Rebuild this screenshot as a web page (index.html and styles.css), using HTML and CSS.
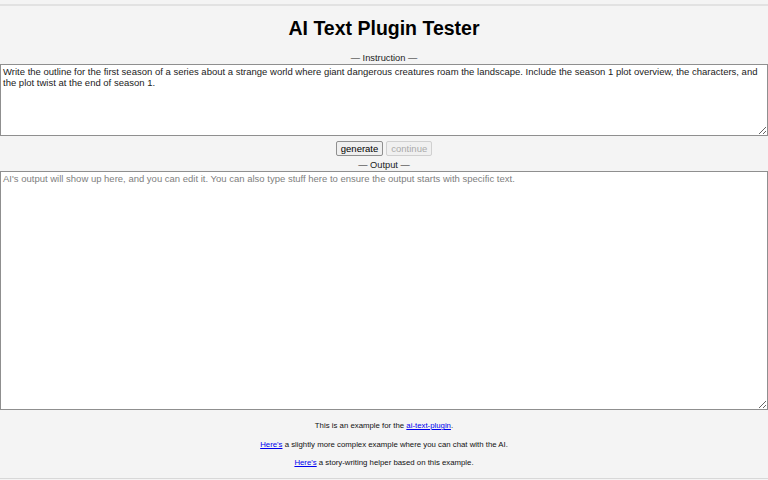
FILE: index.html
```html
<!DOCTYPE html>
<html lang="en">
<head>
    <meta charset="utf-8" />
    <meta name="viewport" content="width=device-width, initial-scale=1" />
    <title>AI Text Plugin Tester</title>
    <link rel="stylesheet" href="styles.css">
</head>
<body>

<div class="page">
    <h1 class="title">AI Text Plugin Tester</h1>

    <div class="field-label">— Instruction —</div>
    <textarea id="instruction" class="box box-instruction">Write the outline for the first season of a series about a strange world where giant dangerous creatures roam the landscape. Include the season 1 plot overview, the characters, and the plot twist at the end of season 1.</textarea>

    <div class="buttons">
        <button id="generate-button">generate</button>
        <button id="continue-button" disabled>continue</button>
    </div>

    <div class="field-label">— Output —</div>
    <textarea id="output" class="box box-output" placeholder="AI's output will show up here, and you can edit it. You can also type stuff here to ensure the output starts with specific text."></textarea>

    <div class="notes">
        <p>This is an example for the <a href="#">ai-text-plugin</a>.</p>
        <p><a href="#">Here's</a> a slightly more complex example where you can chat with the AI.</p>
        <p><a href="#">Here's</a> a story-writing helper based on this example.</p>
    </div>
</div>

</body>
</html>
```

FILE: styles.css
```css
* {
    margin: 0;
    padding: 0;
    box-sizing: border-box;
}

html, body {
    width: 100%;
    height: 100%;
}

body {
    overflow: hidden;
    background-color: #f4f4f4;
    font-family: "Liberation Sans", Arial, sans-serif;
    color: #000;
}

.page {
    margin-top: 4px;
    border-top: 2px solid #e2e2e2;
    height: 475px;
    border-bottom: 1px solid #d8d8d8;
}

.title {
    text-align: center;
    font-size: 19.5px;
    font-weight: bold;
    padding-top: 11px;
    line-height: 23px;
}

.field-label {
    text-align: center;
    font-size: 9.3px;
    line-height: 11px;
    color: #222;
}

.title + .field-label {
    margin-top: 13px;
}

.box {
    display: block;
    width: 100%;
    border: 1px solid #8f8f8f;
    background: #fff;
    font-family: "Liberation Sans", Arial, sans-serif;
    font-size: 9.5px;
    line-height: 11px;
    padding: 1px 2px;
    color: #222;
    resize: vertical;
}

.box::placeholder {
    color: #808080;
}

.box-instruction {
    height: 72px;
}

.box-output {
    height: 239px;
}

.buttons {
    display: flex;
    justify-content: center;
    gap: 3px;
    padding: 5px 0 4px;
}

.buttons button {
    font-family: "Liberation Sans", Arial, sans-serif;
    font-size: 9.5px;
    padding: 1px 4px;
    height: 15px;
    border: 1px solid #8f8f8f;
    border-radius: 2px;
    background: #efefef;
    color: #000;
}

.buttons button:disabled {
    border-color: #d0d0d0;
    background: #f0f0f0;
    color: #aaa;
}

.notes {
    text-align: center;
    font-size: 7.8px;
    padding-top: 11px;
    color: #111;
}

.notes p {
    line-height: 10px;
    margin-bottom: 8.5px;
}

.notes a {
    color: #0000ee;
}
```
